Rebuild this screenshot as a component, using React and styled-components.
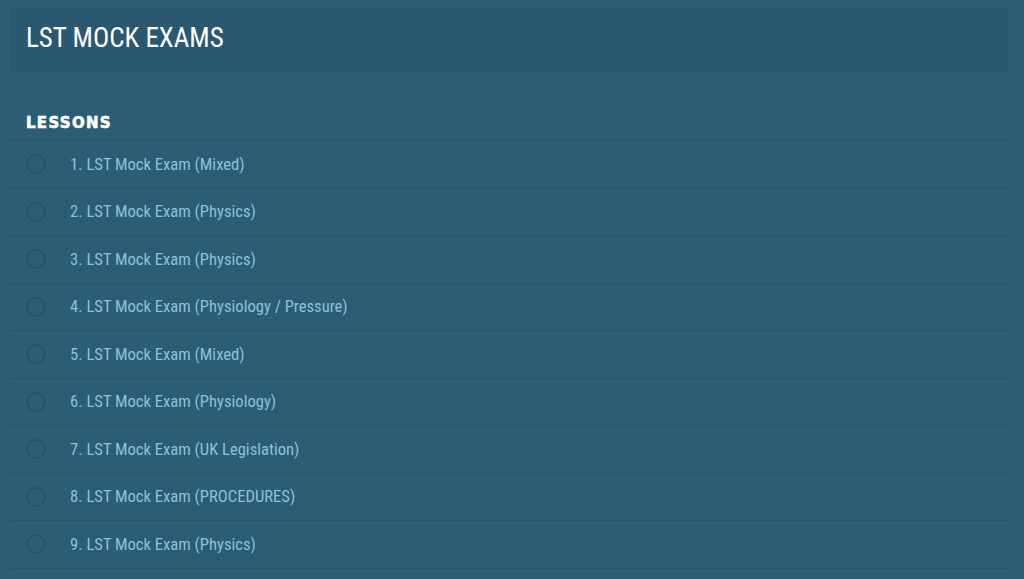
import React from 'react';
import styled, { createGlobalStyle } from 'styled-components';

const GlobalStyle = createGlobalStyle`
  html, body {
    margin: 0;
    padding: 0;
    background: #2b5d75;
  }
  body {
    font-family: Roboto, "Liberation Sans", sans-serif;
  }
`;

const Page = styled.div`
  width: 1024px;
  height: 579px;
  overflow: hidden;
  background: #2b5d75;
  padding: 9px 16px 0 10px;
  box-sizing: border-box;
`;

const Header = styled.header`
  background: #295870;
  height: 63px;
  box-sizing: border-box;
  display: flex;
  align-items: flex-start;
  padding: 16px 16px 0;
`;

const Title = styled.h1`
  margin: 0;
  font-family: Roboto, "Liberation Sans", sans-serif;
  font-stretch: 85%;
  font-weight: 400;
  font-size: 27px;
  line-height: 1;
  color: #ffffff;
`;

const Section = styled.section`
  margin-top: 40px;
`;

const SectionTitle = styled.h2`
  margin: 0;
  padding: 2px 16px 8px;
  font-family: "DejaVu Sans", Lato, sans-serif;
  font-weight: 700;
  font-size: 15px;
  color: #ffffff;
  letter-spacing: 1.3px;
  -webkit-text-stroke: 0.6px #ffffff;
  border-bottom: 1px solid rgba(30, 70, 90, 0.35);
`;

const List = styled.ul`
  list-style: none;
  margin: 0;
  padding: 0;
`;

const Row = styled.li`
  height: 47.5px;
  box-sizing: border-box;
  display: flex;
  align-items: center;
  gap: 24px;
  padding: 0 16px;
  border-bottom: 1px solid rgba(30, 70, 90, 0.35);
`;

const Status = styled.span`
  width: 16px;
  height: 16px;
  border-radius: 50%;
  border: 2px solid #27536a;
  flex: none;
`;

const LessonLink = styled.a`
  font-family: Roboto, "Liberation Sans", sans-serif;
  font-stretch: 85%;
  font-size: 16.6px;
  color: #8ac2dc;
  text-decoration: none;
`;

const lessons = [
  'LST Mock Exam (Mixed)',
  'LST Mock Exam (Physics)',
  'LST Mock Exam (Physics)',
  'LST Mock Exam (Physiology / Pressure)',
  'LST Mock Exam (Mixed)',
  'LST Mock Exam (Physiology)',
  'LST Mock Exam (UK Legislation)',
  'LST Mock Exam (PROCEDURES)',
  'LST Mock Exam (Physics)',
];

export default function App() {
  return (
    <Page>
      <GlobalStyle />
      <Header>
        <Title>LST MOCK EXAMS</Title>
      </Header>
      <Section>
        <SectionTitle>LESSONS</SectionTitle>
        <List>
          {lessons.map((name, i) => (
            <Row key={i}>
              <Status />
              <LessonLink href="#">
                {i + 1}. {name}
              </LessonLink>
            </Row>
          ))}
        </List>
      </Section>
    </Page>
  );
}
